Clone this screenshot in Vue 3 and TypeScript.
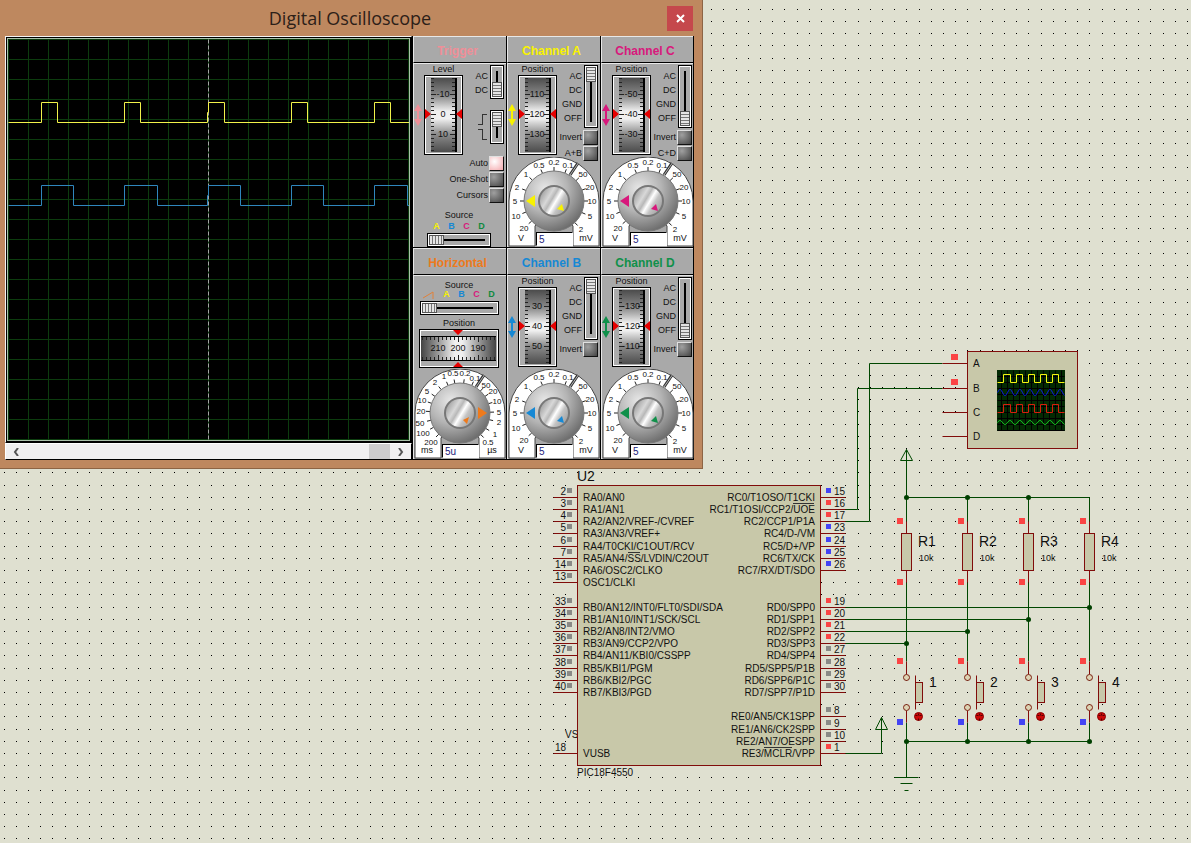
<script setup lang="ts">
import { ref } from 'vue'

type Kind = 'trigger' | 'channel' | 'horizontal'
interface Panel {
  title: string
  kind: Kind
  color: string
  marks: string[]
  coupling: number
  extra: string[]
}
interface Mark { t: string; x: number; y: number }
interface Pin { n: string; name: string; y: number; c: string; bar?: [number, number] }

const panels: Panel[] = [
  { title: 'Trigger', kind: 'trigger', color: '#ef8f98', marks: ['-10', '0', '10'], coupling: 1, extra: ['Auto', 'One-Shot', 'Cursors'] },
  { title: 'Channel A', kind: 'channel', color: '#f8f200', marks: ['110', '120', '130'], coupling: 0, extra: ['Invert', 'A+B'] },
  { title: 'Channel C', kind: 'channel', color: '#d8187c', marks: ['-50', '-40', '-30'], coupling: 3, extra: ['Invert', 'C+D'] },
  { title: 'Horizontal', kind: 'horizontal', color: '#ee7a1c', marks: ['210', '200', '190'], coupling: 0, extra: [] },
  { title: 'Channel B', kind: 'channel', color: '#1688d4', marks: ['30', '40', '50'], coupling: 0, extra: ['Invert'] },
  { title: 'Channel D', kind: 'channel', color: '#10904a', marks: ['-130', '-120', '-110'], coupling: 3, extra: ['Invert'] },
]

const sources = [
  { t: 'A', c: '#f8f200' },
  { t: 'B', c: '#1688d4' },
  { t: 'C', c: '#d8187c' },
  { t: 'D', c: '#108a40' },
]

const voltMarks: Mark[] = [
  { t: '20', x: 16, y: 71 }, { t: '10', x: 8, y: 59 }, { t: '5', x: 7, y: 44 }, { t: '2', x: 9, y: 30 },
  { t: '1', x: 18, y: 17 }, { t: '0.5', x: 31, y: 8 }, { t: '0.2', x: 46, y: 5 }, { t: '0.1', x: 60, y: 8 },
  { t: '50', x: 75, y: 17 }, { t: '20', x: 82, y: 30 }, { t: '10', x: 84, y: 44 }, { t: '5', x: 82, y: 59 }, { t: '2', x: 73, y: 72 },
]
const timeMarks: Mark[] = [
  { t: '200', x: 17, y: 73 }, { t: '100', x: 9, y: 64 }, { t: '50', x: 6, y: 54 }, { t: '20', x: 7, y: 42 },
  { t: '10', x: 8, y: 31 }, { t: '5', x: 13, y: 22 }, { t: '2', x: 21, y: 13 }, { t: '1', x: 30, y: 7 },
  { t: '0.5', x: 39, y: 4 }, { t: '0.2', x: 51, y: 4 }, { t: '0.1', x: 61, y: 9 },
  { t: '50', x: 72, y: 16 }, { t: '20', x: 79, y: 22 }, { t: '10', x: 83, y: 32 }, { t: '5', x: 85, y: 43 },
  { t: '2', x: 85, y: 53 }, { t: '1', x: 81, y: 65 }, { t: '0.5', x: 74, y: 73 },
]
const dialMarks = (k: Kind) => (k === 'horizontal' ? timeMarks : voltMarks)
const dialTicks = (k: Kind) =>
  dialMarks(k)
    .map(({ x, y }) => {
      const a = Math.atan2(y - 44, x - 46)
      const p = (r: number) => `${(46 + r * Math.cos(a)).toFixed(1)} ${(44 + r * Math.sin(a)).toFixed(1)}`
      return `M${p(30)}L${p(34)}`
    })
    .join('')

const drumTicks = Array.from({ length: 19 }, (_, i) => {
  const y = 39 + (i - 9) * 4
  const w = (i - 9) % 5 === 0 ? 5 : 3
  return `M7 ${y}h${w}M31 ${y}h${-w}`
}).join('')
const reelTicks = Array.from({ length: 19 }, (_, i) => {
  const x = 39 + (i - 9) * 4
  const h = (i - 9) % 5 === 0 ? 5 : 3
  return `M${x} 8v${h}M${x} 31v${-h}`
}).join('')

const gridLines =
  Array.from({ length: 21 }, (_, i) => `M${i * 20} 0v401`).join('') +
  Array.from({ length: 21 }, (_, i) => `M0 ${i * 20}h401`).join('')

const RED = '#fb4444'
const BLUE = '#4444f4'
const GRAY = '#8a8a86'

const leftPins: Pin[] = [
  ['2', 'RA0/AN0', 497], ['3', 'RA1/AN1', 509], ['4', 'RA2/AN2/VREF-/CVREF', 521], ['5', 'RA3/AN3/VREF+', 533],
  ['6', 'RA4/T0CKI/C1OUT/RCV', 546], ['7', 'RA5/AN4/SS/LVDIN/C2OUT', 558], ['14', 'RA6/OSC2/CLKO', 570], ['13', 'OSC1/CLKI', 582],
  ['33', 'RB0/AN12/INT0/FLT0/SDI/SDA', 607], ['34', 'RB1/AN10/INT1/SCK/SCL', 619], ['35', 'RB2/AN8/INT2/VMO', 631],
  ['36', 'RB3/AN9/CCP2/VPO', 643], ['37', 'RB4/AN11/KBI0/CSSPP', 655], ['38', 'RB5/KBI1/PGM', 668],
  ['39', 'RB6/KBI2/PGC', 680], ['40', 'RB7/KBI3/PGD', 692], ['18', 'VUSB', 753],
].map(([n, name, y]) => ({
  n: n as string,
  name: name as string,
  y: y as number,
  c: n === '18' ? 'none' : GRAY,
  bar: n === '7' ? ([628, 640] as [number, number]) : undefined,
}))

const rightPins: Pin[] = [
  { n: '15', name: 'RC0/T1OSO/T1CKI', y: 497, c: BLUE },
  { n: '16', name: 'RC1/T1OSI/CCP2/UOE', y: 509, c: RED, bar: [793, 814] },
  { n: '17', name: 'RC2/CCP1/P1A', y: 521, c: RED },
  { n: '23', name: 'RC4/D-/VM', y: 533, c: BLUE },
  { n: '24', name: 'RC5/D+/VP', y: 546, c: BLUE },
  { n: '25', name: 'RC6/TX/CK', y: 558, c: BLUE },
  { n: '26', name: 'RC7/RX/DT/SDO', y: 570, c: BLUE },
  { n: '19', name: 'RD0/SPP0', y: 607, c: RED },
  { n: '20', name: 'RD1/SPP1', y: 619, c: RED },
  { n: '21', name: 'RD2/SPP2', y: 631, c: RED },
  { n: '22', name: 'RD3/SPP3', y: 643, c: RED },
  { n: '27', name: 'RD4/SPP4', y: 655, c: GRAY },
  { n: '28', name: 'RD5/SPP5/P1B', y: 668, c: GRAY },
  { n: '29', name: 'RD6/SPP6/P1C', y: 680, c: GRAY },
  { n: '30', name: 'RD7/SPP7/P1D', y: 692, c: GRAY },
  { n: '8', name: 'RE0/AN5/CK1SPP', y: 716, c: GRAY },
  { n: '9', name: 'RE1/AN6/CK2SPP', y: 729, c: GRAY },
  { n: '10', name: 'RE2/AN7/OESPP', y: 741, c: GRAY },
  { n: '1', name: 'RE3/MCLR/VPP', y: 753, c: RED, bar: [764, 792] },
]

const branches = [
  { x: 906, tap: 643, n: 1 },
  { x: 967, tap: 631, n: 2 },
  { x: 1028, tap: 619, n: 3 },
  { x: 1089, tap: 607, n: 4 },
]
const probes = [
  { t: 'A', y: 363, live: true },
  { t: 'B', y: 388, live: true },
  { t: 'C', y: 412, live: false },
  { t: 'D', y: 436, live: false },
]
const gridOffsets = [0, 12, 24, 36, 48]
const miniGrid =
  Array.from({ length: 11 }, (_, i) => `M${1001 + i * 6} 370v60`).join('') +
  Array.from({ length: 10 }, (_, i) => `M997 ${376 + i * 6}h67`).join('')
const pulses = 'h6v-8h7v8h6v-8h6v8h6v-8h6v8h6v-8h6v8h6v-8h6v8h6'
const sine = (y: number, amp: number, period: number) =>
  'M' + Array.from({ length: 68 }, (_, i) => `${997 + i} ${(y - amp * Math.sin((i * 2 * Math.PI) / period)).toFixed(1)}`).join('L')

const autoOn = ref(true)
</script>

<template>
  <main class="desk">
    <svg class="schematic" role="img" aria-label="PIC18F4550 schematic">
      <defs>
        <pattern id="dots" x="4" y="58" width="61" height="61" patternUnits="userSpaceOnUse">
          <template v-for="a in gridOffsets" :key="a">
            <rect v-for="b in gridOffsets" :key="b" :x="a" :y="b" width="1" height="1" fill="#000" />
          </template>
        </pattern>
        <clipPath id="chipEdge"><rect x="540" y="720" width="37" height="24" /></clipPath>
      </defs>
      <rect width="100%" height="100%" fill="url(#dots)" shape-rendering="crispEdges" />

      <g transform="translate(0.5 0.5)" class="wires">
        <path d="M942 363H869V521H845M942 388H857V509H845" />
        <path d="M906 449V521M906 497H1089V521M967 497V521M1028 497V521" />
        <path d="M906 449L900 460H912Z" />
        <path v-for="b in branches" :key="b.n" :d="`M${b.x} 582V661M${b.x} 722V741M845 ${b.tap}H${b.x}`" />
        <path d="M906 741H1089M906 741V777M894 777H918M900 783H912M904 790H908" />
        <path d="M845 753H881V717" />
        <path d="M881 717L875 729H887Z" />
      </g>

      <g transform="translate(0.5 0.5)" class="parts">
        <rect x="577" y="485" width="243" height="280" />
        <rect x="967" y="351" width="110" height="97" />
        <path v-for="p in leftPins" :key="p.n" :d="`M553 ${p.y}H577`" />
        <path v-for="p in rightPins" :key="p.n" :d="`M820 ${p.y}H845`" />
        <path v-for="p in probes" :key="p.t" :d="`M942 ${p.y}H967`" />
        <g v-for="b in branches" :key="b.n">
          <path :d="`M${b.x} 521V582M${b.x} 661V674M${b.x} 710V722M${b.x + 9} 675V709`" />
          <rect :x="b.x - 5" y="533" width="10" height="37" />
          <rect :x="b.x + 9" y="682" width="7" height="20" />
          <circle class="terminal" :cx="b.x" cy="677" r="3" />
          <circle class="terminal" :cx="b.x" cy="707" r="3" />
          <circle class="bulb" :cx="b.x + 12" cy="716" r="4" />
          <path class="bulb-mark" :d="`M${b.x + 9} 715h2M${b.x + 13} 715h2M${b.x + 12} 713v2M${b.x + 12} 718v2`" />
        </g>
      </g>

      <g class="joints">
        <template v-for="b in branches" :key="b.n">
          <circle v-if="b.n < 4" :cx="b.x + 0.5" cy="497.5" r="2.5" />
          <circle :cx="b.x + 0.5" :cy="b.tap + 0.5" r="2.5" />
          <circle :cx="b.x + 0.5" cy="741.5" r="2.5" />
        </template>
      </g>

      <g shape-rendering="crispEdges">
        <rect v-for="p in leftPins" :key="p.n" x="567" :y="p.y - 9" width="5" height="5" :fill="p.c" />
        <rect v-for="p in rightPins" :key="p.n" x="826" :y="p.y - 9" width="5" height="5" :fill="p.c" />
        <template v-for="p in probes" :key="p.t">
          <rect v-if="p.live" x="951" :y="p.y - 9" width="7" height="6" :fill="RED" />
        </template>
        <template v-for="b in branches" :key="b.n">
          <rect :x="b.x - 9" y="518" width="6" height="6" :fill="RED" />
          <rect :x="b.x - 9" y="579" width="6" height="6" :fill="RED" />
          <rect :x="b.x - 9" y="658" width="6" height="6" :fill="RED" />
          <rect :x="b.x - 9" y="719" width="6" height="6" :fill="BLUE" />
        </template>
        <rect x="997" y="370" width="68" height="61" fill="#032a03" />
      </g>
      <g transform="translate(0.5 0.5)" class="traces">
        <path :d="miniGrid" stroke="#000" />
        <path :d="'M997 382' + pulses" stroke="#f4f410" />
        <path :d="'M997 412' + pulses" stroke="#d8200c" />
        <path :d="sine(392, 3, 10)" stroke="#0c1cf0" />
        <path :d="sine(422, 2, 10)" stroke="#18e028" />
      </g>

      <g class="pin-text">
        <g v-for="p in leftPins" :key="p.n">
          <text x="583" :y="p.y + 4">{{ p.name }}</text>
          <text x="566" :y="p.y - 2" text-anchor="end">{{ p.n }}</text>
          <path v-if="p.bar" :d="`M${p.bar[0]} ${p.y - 6}H${p.bar[1]}`" />
        </g>
        <g v-for="p in rightPins" :key="p.n">
          <text x="815" :y="p.y + 4" text-anchor="end">{{ p.name }}</text>
          <text x="834" :y="p.y - 2">{{ p.n }}</text>
          <path v-if="p.bar" :d="`M${p.bar[0]} ${p.y - 6}H${p.bar[1]}`" />
        </g>
        <text x="565" y="738" clip-path="url(#chipEdge)">VSS</text>
        <text x="577" y="776">PIC18F4550</text>
        <text v-for="p in probes" :key="p.t" x="973" :y="p.y + 4">{{ p.t }}</text>
        <text class="big" x="577" y="481">U2</text>
        <g v-for="b in branches" :key="b.n">
          <text class="big" :x="b.x + 12" y="546">R{{ b.n }}</text>
          <text class="small" :x="b.x + 13" y="561">10k</text>
          <text class="big" :x="b.x + 23" y="687">{{ b.n }}</text>
        </g>
      </g>
    </svg>

    <section class="window" aria-label="Digital Oscilloscope">
      <header class="titlebar">
        <h1>Digital Oscilloscope</h1>
        <button class="close" type="button" aria-label="Close">
          <svg width="9" height="9" viewBox="0 0 9 9"><path d="M1 1l7 7M8 1l-7 7" stroke="#fff" stroke-width="2" /></svg>
        </button>
      </header>

      <div class="client">
        <div class="display">
          <div class="bezel">
            <svg class="screen" viewBox="0 0 401 401" role="img" aria-label="Waveforms">
              <rect width="401" height="401" fill="#000" />
              <g transform="translate(0.5 0.5)" fill="none">
                <path :d="gridLines" stroke="#0c3c0e" />
                <path d="M200 0V400" stroke="#a4a4a4" stroke-dasharray="4 2" />
                <path stroke="#f2f24a" d="M0 83H33V63H49V83H116V63H132V83H199V73H200V63H216V83H283V63H299V83H366V63H382V83H401" />
                <path stroke="#2f86bd" d="M0 166H33V146H65V166H116V146H149V166H199V156H200V146H232V166H283V146H315V166H366V146H399V166H401" />
              </g>
            </svg>
          </div>
          <div class="scrollbar">
            <button type="button" aria-label="Scroll left"><svg width="7" height="8" viewBox="0 0 7 8"><path d="M5 0L2 4L5 8" /></svg></button>
            <div class="rail"><span class="thumb"></span></div>
            <button type="button" aria-label="Scroll right"><svg width="7" height="8" viewBox="0 0 7 8"><path d="M2 0L5 4L2 8" /></svg></button>
          </div>
        </div>

        <div class="panels">
          <article v-for="p in panels" :key="p.title" class="panel">
            <h2 :style="{ color: p.color }">{{ p.title }}</h2>
            <div class="body">
              <div v-if="p.kind !== 'horizontal'" class="upper">
                <div class="gauge">
                  <span class="caption">{{ p.kind === 'trigger' ? 'Level' : 'Position' }}</span>
                  <svg class="updown" width="9" height="22" viewBox="0 0 9 22" :fill="p.color">
                    <path d="M4 0L8 7H5V15H8L4 22L0 15H3V7H0Z" />
                  </svg>
                  <svg class="drum" width="39" height="80" viewBox="0 0 39 80" role="img" :aria-label="p.title + ' ' + p.marks[1]">
                    <defs>
                      <linearGradient :id="'drum' + p.title.slice(-1)" x1="0" y1="0" x2="0" y2="1">
                        <stop offset="0" stop-color="#4c4c4c" /><stop offset="0.25" stop-color="#8e8e8e" />
                        <stop offset="0.45" stop-color="#f0f0f0" /><stop offset="0.55" stop-color="#f0f0f0" />
                        <stop offset="0.75" stop-color="#8e8e8e" /><stop offset="1" stop-color="#4c4c4c" />
                      </linearGradient>
                    </defs>
                    <g shape-rendering="crispEdges">
                      <rect width="39" height="80" fill="#000" />
                      <rect x="1" y="1" width="37" height="78" fill="#fff" />
                      <rect x="2" y="2" width="35" height="76" fill="#ababab" />
                      <rect x="7" y="3" width="26" height="74" fill="#000" />
                      <rect x="7" y="3" width="24" height="74" :fill="`url(#drum${p.title.slice(-1)})`" />
                      <path :d="drumTicks" stroke="#222" />
                    </g>
                    <path d="M1 34L7 39L1 44ZM38 34L32 39L38 44Z" fill="#e60000" />
                    <text v-for="(m, i) in p.marks" :key="m" x="19" :y="22 + i * 20" text-anchor="middle">{{ m }}</text>
                  </svg>
                </div>

                <div v-if="p.kind === 'channel'" class="controls">
                  <div class="coupling">
                    <div class="steps"><span>AC</span><span>DC</span><span>GND</span><span>OFF</span></div>
                    <input class="vswitch" type="range" min="0" max="3" :value="p.coupling" :aria-label="p.title + ' coupling'" />
                  </div>
                  <label v-for="e in p.extra" :key="e" class="toggle">{{ e }}<button type="button" :aria-label="e"></button></label>
                </div>
                <div v-else class="controls">
                  <div class="coupling brief">
                    <div class="steps"><span>AC</span><span>DC</span></div>
                    <input class="vswitch" type="range" min="0" max="1" value="1" aria-label="Trigger coupling" />
                  </div>
                  <div class="coupling brief">
                    <svg class="edges" width="9" height="28" viewBox="0 0 9 28"><path d="M0 11H4V1H9M0 16H4V26H9" /></svg>
                    <input class="vswitch" type="range" min="0" max="1" value="0" aria-label="Trigger edge" />
                  </div>
                  <label v-for="e in p.extra" :key="e" class="toggle">{{ e }}<button
                    type="button" :aria-label="e" :class="{ lit: e === 'Auto' && autoOn }"
                    @click="e === 'Auto' && (autoOn = !autoOn)"></button></label>
                </div>
              </div>

              <div v-if="p.kind !== 'channel'" class="source" :class="p.kind">
                <span class="caption">Source</span>
                <div class="letters">
                  <svg v-if="p.kind === 'horizontal'" width="12" height="8" viewBox="0 0 12 8"><path d="M0 7L10 1V8" fill="none" stroke="#e0813a" /></svg>
                  <b v-for="s in sources" :key="s.t" :style="{ color: s.c }">{{ s.t }}</b>
                </div>
                <input class="hswitch" type="range" min="0" max="4" value="0" :aria-label="p.title + ' source'" />
              </div>

              <div v-if="p.kind === 'horizontal'" class="reel">
                <span class="caption">Position</span>
                <svg width="80" height="39" viewBox="0 0 80 39" role="img" aria-label="Horizontal position 200">
                  <defs>
                    <linearGradient id="reel">
                      <stop offset="0" stop-color="#444" /><stop offset="0.2" stop-color="#8e8e8e" />
                      <stop offset="0.45" stop-color="#f0f0f0" /><stop offset="0.55" stop-color="#f0f0f0" />
                      <stop offset="0.8" stop-color="#8e8e8e" /><stop offset="1" stop-color="#444" />
                    </linearGradient>
                  </defs>
                  <g shape-rendering="crispEdges">
                    <rect width="80" height="39" fill="#000" />
                    <rect x="1" y="1" width="78" height="37" fill="#fff" />
                    <rect x="2" y="2" width="76" height="35" fill="#ababab" />
                    <rect x="2" y="7" width="75" height="25" fill="#000" />
                    <rect x="2" y="8" width="75" height="23" fill="url(#reel)" />
                    <path :d="reelTicks" stroke="#222" />
                  </g>
                  <path d="M34 1H44L39 6ZM34 38H44L39 33Z" fill="#e60000" />
                  <text v-for="(m, i) in p.marks" :key="m" :x="19 + i * 20" y="22" text-anchor="middle">{{ m }}</text>
                </svg>
              </div>

              <div v-if="p.kind !== 'trigger'" class="dial">
                <svg width="92" height="90" viewBox="0 0 92 90" role="img" :aria-label="p.title + ' scale'">
                  <defs>
                    <radialGradient :id="'knob' + p.title.slice(-1)" cx="0.35" cy="0.3" r="0.75">
                      <stop offset="0" stop-color="#e8e8e8" /><stop offset="0.5" stop-color="#b4b4b4" /><stop offset="1" stop-color="#6a6a6a" />
                    </radialGradient>
                    <linearGradient :id="'cap' + p.title.slice(-1)" x1="0" y1="0.2" x2="1" y2="0.8">
                      <stop offset="0" stop-color="#9a9a9a" /><stop offset="0.3" stop-color="#d8d8d8" />
                      <stop offset="0.42" stop-color="#b8b8b8" /><stop offset="0.55" stop-color="#fff" />
                      <stop offset="0.7" stop-color="#c4c4c4" /><stop offset="1" stop-color="#9c9c9c" />
                    </linearGradient>
                  </defs>
                  <path d="M1 89V44A45 44 0 0 1 91 44V89H65V69L46 44L27 69V89Z" fill="#fff" stroke="#444" />
                  <path d="M62 18L70 6" stroke="#333" stroke-width="3" />
                  <path d="M62 18L71 5" stroke="#b4b4b4" />
                  <path :d="dialTicks(p.kind)" stroke="#222" />
                  <circle cx="46" cy="44" r="30" :fill="`url(#knob${p.title.slice(-1)})`" stroke="#777" />
                  <circle cx="46" cy="44" r="16" fill="#777" />
                  <circle cx="46" cy="44" r="14" :fill="`url(#cap${p.title.slice(-1)})`" />
                  <template v-if="p.kind === 'channel'">
                    <path d="M18 44L27 38V50Z" :fill="p.color" />
                    <path d="M49 52L54 47L56 54Z" :fill="p.color" />
                  </template>
                  <template v-else>
                    <path d="M64 38L73 44L64 50Z" :fill="p.color" />
                    <path d="M49 51L55 48L53 55Z" :fill="p.color" />
                  </template>
                  <text v-for="(m, i) in dialMarks(p.kind)" :key="i" class="mark" :x="m.x" :y="m.y + 3" text-anchor="middle">{{ m.t }}</text>
                  <text x="13" y="84" text-anchor="middle">{{ p.kind === 'channel' ? 'V' : 'ms' }}</text>
                  <text x="78" y="84" text-anchor="middle">{{ p.kind === 'channel' ? 'mV' : 'µs' }}</text>
                </svg>
                <input class="value" type="text" :value="p.kind === 'channel' ? '5' : '5u'" :aria-label="p.title + ' scale value'" />
              </div>
            </div>
          </article>
        </div>
      </div>
    </section>
  </main>
</template>

<style>
body {
  margin: 0;
  background: #dfe0d0;
}
</style>

<style scoped>
.desk {
  position: relative;
  min-height: 100vh;
  overflow: hidden;
  font-family: "Liberation Sans", Arial, sans-serif;
  color: #111;
}
.desk * {
  box-sizing: border-box;
}
svg {
  display: block;
}
.schematic {
  position: absolute;
  inset: 0;
  width: 100%;
  height: 100%;
}
.wires path {
  fill: none;
  stroke: #004800;
}
.parts rect,
.parts path {
  fill: #c8c8a9;
  stroke: #800c0a;
}
.parts .terminal {
  fill: #dcd4b4;
  stroke: #7c2010;
}
.parts .bulb {
  fill: #cc0808;
  stroke: #8c0000;
}
.parts .bulb-mark {
  stroke: #500;
}
.joints circle {
  fill: #004000;
}
.traces path {
  fill: none;
}
.pin-text text {
  font-size: 10px;
  fill: #111;
}
.pin-text .big {
  font-size: 14px;
}
.pin-text .small {
  font-size: 9px;
}
.pin-text path {
  stroke: #333;
  shape-rendering: crispEdges;
}

.window {
  position: absolute;
  top: 0;
  left: 0;
  padding: 0 8px 8px 5px;
  background: #be885f;
  border-right: 1px solid #8d6444;
  border-bottom: 1px solid #8d6444;
}
.titlebar {
  display: flex;
  align-items: center;
  height: 36px;
}
.titlebar h1 {
  flex: 1;
  margin: 0;
  padding-left: 28px;
  text-align: center;
  font: 400 18px/34px "Open Sans", "Noto Sans", sans-serif;
  color: #2c2018;
}
.close {
  display: grid;
  place-items: center;
  width: 26px;
  height: 25px;
  margin-right: 1px;
  padding: 0;
  border: 0;
  background: #c5484c;
}
.client {
  display: grid;
  grid-template-columns: 407px auto;
}
.display {
  display: flex;
  flex-direction: column;
}
.bezel {
  padding: 1px;
  border: 1px solid #f4f4f4;
  border-right-color: #000;
  border-bottom-color: #000;
  background: #000;
}
.screen {
  width: 403px;
  height: 403px;
  border: 1px solid #a9bfa9;
}
.scrollbar {
  display: flex;
  flex: 1;
  background: #f0eff0;
  border: 1px solid #fff;
  border-right-color: #000;
  border-bottom-color: #000;
}
.scrollbar button {
  display: grid;
  place-items: center;
  width: 21px;
  padding: 0;
  border: 0;
  background: none;
}
.scrollbar path {
  fill: none;
  stroke: #555;
  stroke-width: 2;
}
.rail {
  display: flex;
  flex: 1;
  justify-content: flex-end;
}
.thumb {
  width: 21px;
  background: #cdcccd;
}
.panels {
  display: grid;
  grid-template-columns: repeat(3, 94px);
}
.panel {
  height: 212px;
  border-left: 1px solid #000;
  border-bottom: 1px solid #000;
  background: #a9a9a9;
}
.panel:nth-child(3n) {
  border-right: 1px solid #000;
}
.panel h2 {
  height: 27px;
  margin: 0;
  padding-right: 5px;
  border-top: 1px solid #e8e8e8;
  border-left: 1px solid #e8e8e8;
  border-bottom: 1px solid #000;
  text-align: center;
  font-size: 12px;
  line-height: 28px;
}
.body {
  border-top: 1px solid #e8e8e8;
  border-left: 1px solid #e8e8e8;
  font-size: 9px;
  line-height: 11px;
}
.body text {
  font-size: 9px;
  fill: #111;
}
.body .mark {
  font-size: 8px;
}
.upper {
  display: flex;
  height: 93px;
}
.gauge {
  display: grid;
  grid-template-columns: 10px 39px;
  grid-template-rows: 11px 80px;
  align-items: center;
}
.gauge .caption {
  grid-column: 2;
}
.caption {
  display: block;
  text-align: center;
}
.controls {
  flex: 1;
  min-width: 0;
}
.coupling {
  display: flex;
  justify-content: flex-end;
  gap: 2px;
  height: 65px;
  padding: 1px 1px 1px 0;
}
.panel:not(:nth-child(3n)) .coupling,
.panel:not(:nth-child(3n)) .toggle {
  padding-right: 2px;
}
.steps {
  display: flex;
  flex-direction: column;
  padding-top: 4px;
  text-align: right;
  line-height: 14px;
}
.brief {
  height: 36px;
}
.brief + .brief {
  height: 45px;
  padding-top: 10px;
}
.brief + .brief + .toggle {
  margin-top: 10px;
}
.edges {
  margin: 3px 1px 0 0;
}
.edges path {
  fill: none;
  stroke: #333;
  shape-rendering: crispEdges;
}
.vswitch,
.hswitch {
  appearance: none;
  margin: 0;
  padding: 1px;
  border: 1px solid #000;
  box-shadow: inset 0 0 0 1px #fff;
  background: linear-gradient(#000, #000) center no-repeat #a9a9a9;
}
.vswitch {
  writing-mode: vertical-lr;
  width: 14px;
  height: 100%;
  background-size: 2px calc(100% - 10px);
}
.hswitch {
  display: block;
  width: 64px;
  height: 14px;
  background-size: calc(100% - 10px) 2px;
}
.vswitch::-webkit-slider-thumb {
  appearance: none;
  width: 10px;
  height: 15px;
  border: 1px solid #555;
  background: repeating-linear-gradient(#e4e4e4 0 2px, #777 2px 3px);
}
.hswitch::-webkit-slider-thumb {
  appearance: none;
  width: 15px;
  height: 10px;
  border: 1px solid #555;
  background: repeating-linear-gradient(90deg, #e4e4e4 0 2px, #777 2px 3px);
}
.toggle {
  display: flex;
  align-items: center;
  justify-content: flex-end;
  gap: 1px;
  height: 16px;
  padding-right: 1px;
  white-space: nowrap;
}
.toggle button {
  flex: none;
  width: 15px;
  height: 15px;
  padding: 0;
  border: 1px solid #e0e0e0;
  border-right-color: #111;
  border-bottom-color: #111;
  background: radial-gradient(circle at 30% 30%, #a0a0a0, #444);
}
.toggle .lit {
  background: radial-gradient(circle at 35% 35%, #fff, #f4a8ac);
}
.source {
  display: flex;
  flex-direction: column;
  align-items: center;
  padding-right: 2px;
}
.source.trigger {
  padding-top: 53px;
}
.source.horizontal {
  padding-top: 4px;
}
.source.horizontal .hswitch {
  width: 79px;
}
.source.horizontal .caption {
  height: 9px;
}
.letters {
  display: flex;
  gap: 8px;
}
.letters svg {
  margin-top: 2px;
}
.letters b {
  width: 7px;
  text-align: center;
}
.source .hswitch {
  margin-top: 1px;
}
.reel {
  display: grid;
  justify-content: center;
  padding-top: 3px;
  padding-right: 2px;
}
.dial {
  position: relative;
}
.source.horizontal ~ .dial {
  margin-top: 1px;
}
.value {
  position: absolute;
  bottom: 1px;
  left: 28px;
  width: 37px;
  height: 14px;
  padding: 0 2px;
  border: 1px solid #fff;
  border-top-color: #000;
  border-left-color: #000;
  background: #fff;
  color: #1c1c7c;
  font: 10px/12px "Liberation Sans", Arial, sans-serif;
}
</style>
